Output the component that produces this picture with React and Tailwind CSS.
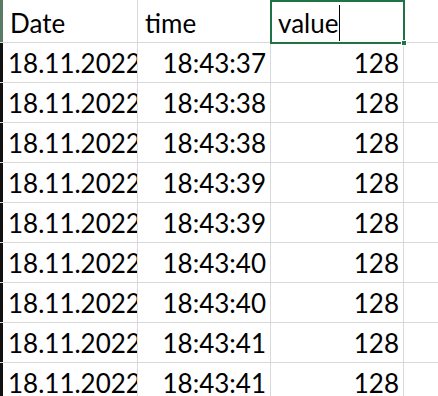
import React from 'react';

const rows = [
  ['18.11.2022', '18:43:37', '128'],
  ['18.11.2022', '18:43:38', '128'],
  ['18.11.2022', '18:43:38', '128'],
  ['18.11.2022', '18:43:39', '128'],
  ['18.11.2022', '18:43:39', '128'],
  ['18.11.2022', '18:43:40', '128'],
  ['18.11.2022', '18:43:40', '128'],
  ['18.11.2022', '18:43:41', '128'],
  ['18.11.2022', '18:43:41', '128'],
];

const Cell = ({ width, align = 'left', children }) => (
  <div
    className={`${width} shrink-0 h-full border-r border-[#d9d9d9] overflow-hidden whitespace-nowrap flex items-end pb-[6px] ${
      align === 'right' ? 'justify-end pr-[4px]' : 'pl-[7px]'
    }`}
  >
    <span className="leading-none">{children}</span>
  </div>
);

const App = () => {
  return (
    <div
      className="w-[438px] h-[396px] overflow-hidden bg-white text-[26px] text-black relative"
      style={{ fontFamily: 'Lato, "Open Sans", sans-serif' }}
    >
      {/* Header row */}
      <div className="flex h-[43px] border-b border-[#d9d9d9]">
        <div className="w-[3px] shrink-0 bg-[#5b7a66]" />
        <Cell width="w-[135px]">Date</Cell>
        <Cell width="w-[133px]">time</Cell>
        <Cell width="w-[133px]">
          <span className="relative">
            value
            <span className="absolute left-full ml-[1px] -top-[2px] w-px h-[36px] bg-black" />
          </span>
        </Cell>
        <div className="flex-1" />
      </div>

      {/* Data rows */}
      {rows.map((r, i) => (
        <div key={i} className="flex h-[40px] border-b border-[#d9d9d9]">
          <div className="w-[3px] shrink-0 bg-[#111]" />
          <Cell width="w-[135px]">
            <span className="-ml-[2px]">{r[0]}</span>
          </Cell>
          <Cell width="w-[133px]" align="right">{r[1]}</Cell>
          <Cell width="w-[133px]" align="right">{r[2]}</Cell>
          <div className="flex-1" />
        </div>
      ))}

      {/* Selected cell */}
      <div className="absolute left-[270px] top-0 w-[135px] h-[44px] border-2 border-[#217346] pointer-events-none" />
      <div className="absolute left-[401px] top-[40px] w-[6px] h-[6px] bg-[#217346] border border-white" />
    </div>
  );
};

export default App;
